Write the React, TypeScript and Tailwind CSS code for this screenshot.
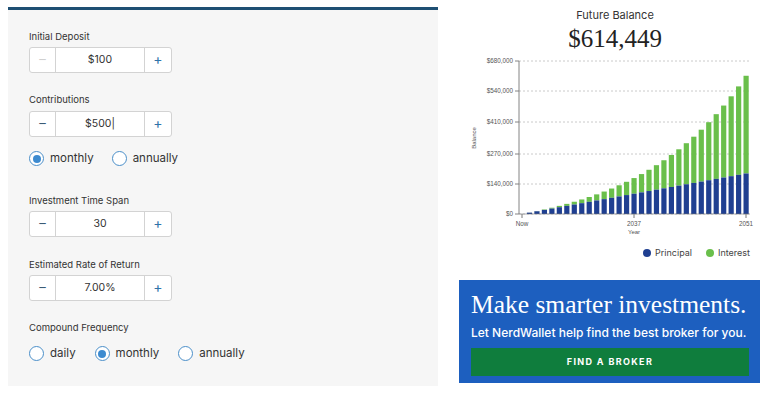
import React from "react";

const SANS = "font-['Inter','Open_Sans',sans-serif]";
const SERIF = "font-['Liberation_Serif','DejaVu_Serif',serif]";

function Stepper({ value, minusDisabled }: { value: string; minusDisabled?: boolean }) {
  return (
    <div className="flex h-[26px] w-[143px] rounded-[3px] border border-[#d3d3d3] bg-white">
      <div
        className={`flex w-[26px] items-center justify-center border-r border-[#d3d3d3] pb-[2px] text-[13px] leading-none ${
          minusDisabled ? "text-[#d0d0d0]" : "text-[#3b5b75]"
        }`}
      >
        –
      </div>
      <div className="flex flex-1 items-center justify-center text-[10.5px] text-[#333]">{value}</div>
      <div className="flex w-[27px] items-center justify-center border-l border-[#d3d3d3] pb-[2px] text-[14px] leading-none text-[#2f74aa]">
        +
      </div>
    </div>
  );
}

function Radio({ label, checked }: { label: string; checked?: boolean }) {
  return (
    <div className="flex items-center gap-[6px]">
      <div className="flex h-[15px] w-[15px] items-center justify-center rounded-full border-[1.5px] border-[#4b8fc9] bg-white">
        {checked && <div className="h-[8px] w-[8px] rounded-full bg-[#3d8bd0]" />}
      </div>
      <span className="text-[11.5px] text-[#333]">{label}</span>
    </div>
  );
}

function Label({ children }: { children: React.ReactNode }) {
  return <div className="text-[9.5px] leading-[14px] text-[#333]">{children}</div>;
}

function Chart() {
  const r = 0.07 / 12;
  const years = Array.from({ length: 31 }, (_, y) => {
    const n = y * 12;
    const g = Math.pow(1 + r, n);
    const total = 100 * g + (n === 0 ? 0 : 500 * ((g - 1) / r) * (1 + r));
    const principal = 100 + 6000 * y;
    return { principal, total };
  });
  const base = 162;
  const scale = 153 / 680000;
  const ticks = [
    { v: "$680,000", y: 9 },
    { v: "$540,000", y: 39 },
    { v: "$410,000", y: 70 },
    { v: "$270,000", y: 102 },
    { v: "$140,000", y: 132 },
    { v: "$0", y: 162 },
  ];
  return (
    <svg width="301" height="190" className="block">
      {ticks.map((t) => (
        <g key={t.v}>
          <line
            x1="60"
            x2="291"
            y1={t.y}
            y2={t.y}
            stroke="#bdbdbd"
            strokeWidth="0.8"
            strokeDasharray="2 2"
          />
          <line x1="56" x2="60" y1={t.y} y2={t.y} stroke="#666" strokeWidth="0.8" />
          <text x="54" y={t.y + 2.2} textAnchor="end" fontSize="6.3" fill="#555" fontFamily="Liberation Sans, sans-serif">
            {t.v}
          </text>
        </g>
      ))}
      <line x1="60" x2="60" y1="9" y2="162" stroke="#777" strokeWidth="0.9" />
      {years.map((d, i) => {
        const cx = 63 + i * 7.47;
        const ph = d.principal * scale;
        const th = d.total * scale;
        return (
          <g key={i}>
            <rect x={cx - 2.6} y={base - th} width="5.2" height={th - ph} fill="#6abf4b" />
            <rect x={cx - 2.6} y={base - ph} width="5.2" height={ph} fill="#1f3f91" />
          </g>
        );
      })}
      <line x1="60" x2="291" y1="162" y2="162" stroke="#777" strokeWidth="0.6" />
      {[63, 175, 287].map((x) => (
        <line key={x} x1={x} x2={x} y1="162" y2="166" stroke="#555" strokeWidth="0.8" />
      ))}
      <text x="63" y="174" textAnchor="middle" fontSize="6.3" fill="#555" fontFamily="Liberation Sans, sans-serif">
        Now
      </text>
      <text x="175" y="174" textAnchor="middle" fontSize="6.3" fill="#555" fontFamily="Liberation Sans, sans-serif">
        2037
      </text>
      <text x="287" y="174" textAnchor="middle" fontSize="6.3" fill="#555" fontFamily="Liberation Sans, sans-serif">
        2051
      </text>
      <text x="175" y="182" textAnchor="middle" fontSize="6" fill="#555" fontFamily="Liberation Sans, sans-serif">
        Year
      </text>
      <text
        x="17"
        y="86"
        textAnchor="middle"
        fontSize="6"
        fill="#555"
        fontFamily="Liberation Sans, sans-serif"
        transform="rotate(-90 17 86)"
      >
        Balance
      </text>
    </svg>
  );
}

export default function App() {
  return (
    <div className={`flex h-[395px] w-[768px] bg-white ${SANS}`}>
      <div className="ml-[8px] mt-[7px] h-[379px] w-[430px] border-t-[3px] border-[#1e4f73] bg-[#f6f6f6] pl-[21px] pt-[20px]">
        <Label>Initial Deposit</Label>
        <div className="mt-[3px]">
          <Stepper value="$100" minusDisabled />
        </div>
        <div className="mt-[20px]">
          <Label>Contributions</Label>
        </div>
        <div className="mt-[4px]">
          <Stepper value="$500|" />
        </div>
        <div className="mt-[13px] flex gap-[18px]">
          <Radio label="monthly" checked />
          <Radio label="annually" />
        </div>
        <div className="mt-[27px]">
          <Label>Investment Time Span</Label>
        </div>
        <div className="mt-[3px]">
          <Stepper value="30" />
        </div>
        <div className="mt-[21px]">
          <Label>Estimated Rate of Return</Label>
        </div>
        <div className="mt-[3px]">
          <Stepper value="7.00%" />
        </div>
        <div className="mt-[20px]">
          <Label>Compound Frequency</Label>
        </div>
        <div className="mt-[10px] flex gap-[19px]">
          <Radio label="daily" />
          <Radio label="monthly" checked />
          <Radio label="annually" />
        </div>
      </div>

      <div className="ml-[21px] flex w-[301px] flex-col">
        <div className="pl-[11px] pt-[8px] text-center">
          <div className="text-[11px] leading-[14px] text-[#333]">Future Balance</div>
          <div className={`${SERIF} mt-[3px] text-[25px] leading-[28px] text-[#222]`}>$614,449</div>
        </div>
        <div className="mt-[-1px]">
          <Chart />
        </div>
        <div className="mt-[4px] flex justify-end gap-[14px] pr-[10px] text-[9px] text-[#444]">
          <div className="flex items-center gap-[4px]">
            <div className="h-[8px] w-[8px] rounded-full bg-[#1f3f91]" />
            Principal
          </div>
          <div className="flex items-center gap-[4px]">
            <div className="h-[8px] w-[8px] rounded-full bg-[#6abf4b]" />
            Interest
          </div>
        </div>
        <div className="mt-[20px] h-[103px] bg-[#1d5fbf] px-[12px] pt-[11px]">
          <div className={`${SERIF} text-[25.5px] leading-[28px] text-white`}>Make smarter investments.</div>
          <div className="mt-[6px] text-[12px] font-medium leading-[15px] text-white">
            Let NerdWallet help find the best broker for you.
          </div>
          <div className="mt-[8px] flex h-[28px] w-[278px] items-center justify-center bg-[#0f7d3d] text-[9px] font-bold tracking-[0.15em] text-white">
            FIND A BROKER
          </div>
        </div>
      </div>
    </div>
  );
}
